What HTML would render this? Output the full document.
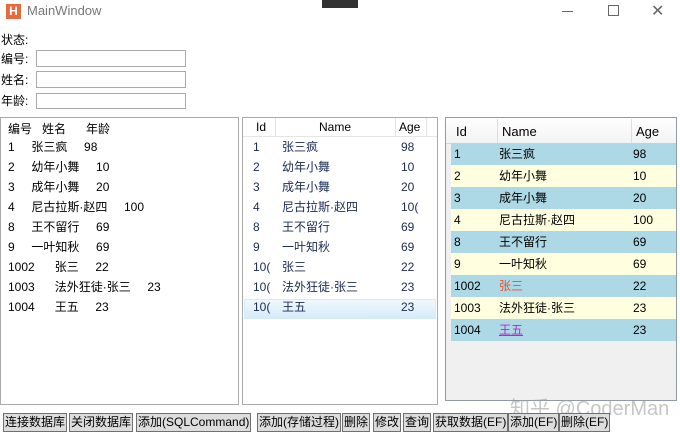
<!DOCTYPE html><html><head><meta charset="utf-8"><style>
*{margin:0;padding:0;box-sizing:border-box}
body{width:680px;height:437px;background:#fff;font-family:"Liberation Sans","Microsoft YaHei","Noto Sans CJK SC",sans-serif;font-size:12px;color:#000;position:relative;overflow:hidden}
.a{position:absolute;white-space:nowrap}
.tb{position:absolute;height:20px;border:1px solid #aaa;background:#fff}
.btn{position:absolute;top:413px;height:19px;border:1px solid #707070;background:#ddd;font-size:12px;line-height:17px;padding:0 1px;white-space:nowrap}
.mid{color:#1c2b55}
.row{position:absolute;left:451px;width:225px;height:22px;line-height:22px}
.row span{position:absolute}
</style></head><body>
<div class="a" style="left:6px;top:4px;width:15px;height:15px;background:#e8693a;color:#fff;font-weight:bold;font-size:12px;text-align:center;line-height:15px">H</div>
<div class="a" style="left:27px;top:3px;font-size:13px;color:#777">MainWindow</div>
<div class="a" style="left:322px;top:0;width:36px;height:8px;background:#333"></div>
<div class="a" style="left:562px;top:11px;width:11px;height:1px;background:#666"></div>
<div class="a" style="left:608px;top:5px;width:11px;height:11px;border:1px solid #666"></div>
<div class="a" style="left:651px;top:1px;font-size:16px;color:#666">✕</div>
<div class="a" style="left:1px;top:31px">状态:</div>
<div class="a" style="left:1px;top:50px">编号:</div>
<div class="a" style="left:1px;top:71px">姓名:</div>
<div class="a" style="left:1px;top:92px">年龄:</div>
<div class="tb" style="left:36px;top:50px;width:150px;height:17px"></div>
<div class="tb" style="left:36px;top:71px;width:150px;height:17px"></div>
<div class="tb" style="left:36px;top:93px;width:150px;height:16px"></div>

<div class="a" style="left:0;top:117px;width:239px;height:288px;border:1px solid #aaa"></div>
<div class="a" style="left:8px;top:120px">编号&nbsp;&nbsp;&nbsp;姓名&nbsp;&nbsp;&nbsp;&nbsp;&nbsp;&nbsp;年龄</div>
<div class="a" style="left:8px;top:137px;line-height:20px">1&nbsp;&nbsp;&nbsp;&nbsp;&nbsp;张三疯&nbsp;&nbsp;&nbsp;&nbsp;&nbsp;98<br>2&nbsp;&nbsp;&nbsp;&nbsp;&nbsp;幼年小舞&nbsp;&nbsp;&nbsp;&nbsp;&nbsp;10<br>3&nbsp;&nbsp;&nbsp;&nbsp;&nbsp;成年小舞&nbsp;&nbsp;&nbsp;&nbsp;&nbsp;20<br>4&nbsp;&nbsp;&nbsp;&nbsp;&nbsp;尼古拉斯·赵四&nbsp;&nbsp;&nbsp;&nbsp;&nbsp;100<br>8&nbsp;&nbsp;&nbsp;&nbsp;&nbsp;王不留行&nbsp;&nbsp;&nbsp;&nbsp;&nbsp;69<br>9&nbsp;&nbsp;&nbsp;&nbsp;&nbsp;一叶知秋&nbsp;&nbsp;&nbsp;&nbsp;&nbsp;69<br>1002&nbsp;&nbsp;&nbsp;&nbsp;&nbsp;&nbsp;张三&nbsp;&nbsp;&nbsp;&nbsp;&nbsp;22<br>1003&nbsp;&nbsp;&nbsp;&nbsp;&nbsp;&nbsp;法外狂徒·张三&nbsp;&nbsp;&nbsp;&nbsp;&nbsp;23<br>1004&nbsp;&nbsp;&nbsp;&nbsp;&nbsp;&nbsp;王五&nbsp;&nbsp;&nbsp;&nbsp;&nbsp;23</div>

<div class="a" style="left:242px;top:117px;width:196px;height:288px;border:1px solid #aaa"></div>
<div class="a" style="left:243px;top:118px;width:194px;height:19px;border-bottom:1px solid #e5e5e5"></div>
<div class="a" style="left:275px;top:118px;width:1px;height:19px;background:#e5e5e5"></div>
<div class="a" style="left:395px;top:118px;width:1px;height:19px;background:#e5e5e5"></div>
<div class="a" style="left:426px;top:118px;width:1px;height:19px;background:#e5e5e5"></div>
<div class="a" style="left:256px;top:120px">Id</div>
<div class="a" style="left:319px;top:120px">Name</div>
<div class="a" style="left:399px;top:120px">Age</div>
<div class="a" style="left:244px;top:299px;width:192px;height:20px;background:linear-gradient(#f1f8fd,#d5ebf9);border:1px solid #d5ebf9"></div>
<div class="a mid" style="left:253px;top:137px;line-height:20px">1<br>2<br>3<br>4<br>8<br>9<br>10(<br>10(<br>10(</div>
<div class="a mid" style="left:282px;top:137px;line-height:20px">张三疯<br>幼年小舞<br>成年小舞<br>尼古拉斯·赵四<br>王不留行<br>一叶知秋<br>张三<br>法外狂徒·张三<br>王五</div>
<div class="a mid" style="left:401px;top:137px;line-height:20px">98<br>10<br>20<br>10(<br>69<br>69<br>22<br>23<br>23</div>

<div class="a" style="left:445px;top:117px;width:232px;height:284px;border:1px solid #8e9aa5;background:#f0f0f0"></div>
<div class="a" style="left:446px;top:118px;width:230px;height:26px;background:linear-gradient(#fff,#f3f3f3);border-bottom:1px solid #d5d5d5"></div>
<div class="a" style="left:497px;top:119px;width:1px;height:24px;background:#ddd"></div>
<div class="a" style="left:631px;top:119px;width:1px;height:24px;background:#ddd"></div>
<div class="a" style="left:456px;top:124px;font-size:13px">Id</div>
<div class="a" style="left:502px;top:124px;font-size:13px">Name</div>
<div class="a" style="left:636px;top:124px;font-size:13px">Age</div>
<div class="row" style="top:143px;background:#add8e6"><span style="left:3px">1</span><span style="left:48px">张三疯</span><span style="left:182px">98</span></div>
<div class="row" style="top:165px;background:#ffffe0"><span style="left:3px">2</span><span style="left:48px">幼年小舞</span><span style="left:182px">10</span></div>
<div class="row" style="top:187px;background:#add8e6"><span style="left:3px">3</span><span style="left:48px">成年小舞</span><span style="left:182px">20</span></div>
<div class="row" style="top:209px;background:#ffffe0"><span style="left:3px">4</span><span style="left:48px">尼古拉斯·赵四</span><span style="left:182px">100</span></div>
<div class="row" style="top:231px;background:#add8e6"><span style="left:3px">8</span><span style="left:48px">王不留行</span><span style="left:182px">69</span></div>
<div class="row" style="top:253px;background:#ffffe0"><span style="left:3px">9</span><span style="left:48px">一叶知秋</span><span style="left:182px">69</span></div>
<div class="row" style="top:275px;background:#add8e6"><span style="left:3px">1002</span><span style="left:48px;color:#e8502a">张三</span><span style="left:182px">22</span></div>
<div class="row" style="top:297px;background:#ffffe0"><span style="left:3px">1003</span><span style="left:48px">法外狂徒·张三</span><span style="left:182px">23</span></div>
<div class="row" style="top:319px;background:#add8e6"><span style="left:3px">1004</span><span style="left:48px;color:#c020d0;text-decoration:underline">王五</span><span style="left:182px">23</span></div>

<div class="a" style="left:510px;top:392px;font-size:20px;color:rgba(160,160,160,0.6)">知乎 @CoderMan</div>

<div class="btn" style="left:3px">连接数据库</div>
<div class="btn" style="left:69px">关闭数据库</div>
<div class="btn" style="left:136px">添加(SQLCommand)</div>
<div class="btn" style="left:257px">添加(存储过程)</div>
<div class="btn" style="left:342px">删除</div>
<div class="btn" style="left:373px">修改</div>
<div class="btn" style="left:403px">查询</div>
<div class="btn" style="left:433px">获取数据(EF)</div>
<div class="btn" style="left:508px">添加(EF)</div>
<div class="btn" style="left:559px">删除(EF)</div>
</body></html>
